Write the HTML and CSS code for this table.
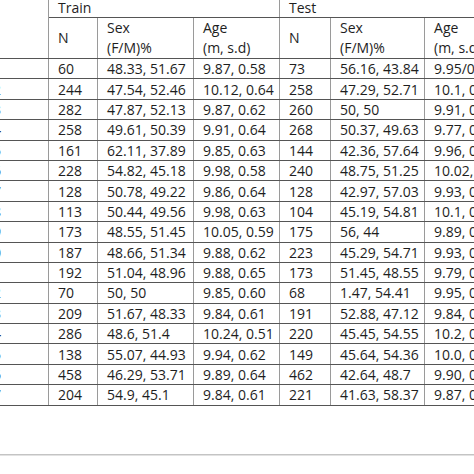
FILE: index.html
```html
<!DOCTYPE html>
<html>
<head>
<meta charset="utf-8">
<link rel="stylesheet" href="styles.css">
</head>
<body>
<div class="page">
<table class="data">
<colgroup>
<col class="c-label"><col class="c-n1"><col class="c-sex1"><col class="c-age1"><col class="c-n2"><col class="c-sex2"><col class="c-age2">
</colgroup>
<thead>
<tr class="h1">
<th class="label" rowspan="2"></th>
<th colspan="3">Train</th>
<th colspan="3">Test</th>
</tr>
<tr class="h2">
<th>N</th><th>Sex<br>(F/M)%</th><th>Age<br>(m, s.d)</th>
<th>N</th><th>Sex<br>(F/M)%</th><th>Age<br>(m, s.d)</th>
</tr>
</thead>
<tbody>
<tr><td class="label">Site 1</td><td>60</td><td>48.33, 51.67</td><td>9.87, 0.58</td><td>73</td><td>56.16, 43.84</td><td>9.95/0.61</td></tr>
<tr><td class="label">Site 2</td><td>244</td><td>47.54, 52.46</td><td>10.12, 0.64</td><td>258</td><td>47.29, 52.71</td><td>10.1, 0.63</td></tr>
<tr><td class="label">Site 3</td><td>282</td><td>47.87, 52.13</td><td>9.87, 0.62</td><td>260</td><td>50, 50</td><td>9.91, 0.62</td></tr>
<tr><td class="label">Site 4</td><td>258</td><td>49.61, 50.39</td><td>9.91, 0.64</td><td>268</td><td>50.37, 49.63</td><td>9.77, 0.63</td></tr>
<tr><td class="label">Site 5</td><td>161</td><td>62.11, 37.89</td><td>9.85, 0.63</td><td>144</td><td>42.36, 57.64</td><td>9.96, 0.61</td></tr>
<tr><td class="label">Site 6</td><td>228</td><td>54.82, 45.18</td><td>9.98, 0.58</td><td>240</td><td>48.75, 51.25</td><td>10.02, 0.60</td></tr>
<tr><td class="label">Site 7</td><td>128</td><td>50.78, 49.22</td><td>9.86, 0.64</td><td>128</td><td>42.97, 57.03</td><td>9.93, 0.62</td></tr>
<tr><td class="label">Site 8</td><td>113</td><td>50.44, 49.56</td><td>9.98, 0.63</td><td>104</td><td>45.19, 54.81</td><td>10.1, 0.61</td></tr>
<tr><td class="label">Site 9</td><td>173</td><td>48.55, 51.45</td><td>10.05, 0.59</td><td>175</td><td>56, 44</td><td>9.89, 0.60</td></tr>
<tr><td class="label">Site 10</td><td>187</td><td>48.66, 51.34</td><td>9.88, 0.62</td><td>223</td><td>45.29, 54.71</td><td>9.93, 0.61</td></tr>
<tr><td class="label">Site 11</td><td>192</td><td>51.04, 48.96</td><td>9.88, 0.65</td><td>173</td><td>51.45, 48.55</td><td>9.79, 0.63</td></tr>
<tr><td class="label">Site 12</td><td>70</td><td>50, 50</td><td>9.85, 0.60</td><td>68</td><td>1.47, 54.41</td><td>9.95, 0.62</td></tr>
<tr><td class="label">Site 13</td><td>209</td><td>51.67, 48.33</td><td>9.84, 0.61</td><td>191</td><td>52.88, 47.12</td><td>9.84, 0.61</td></tr>
<tr><td class="label">Site 14</td><td>286</td><td>48.6, 51.4</td><td>10.24, 0.51</td><td>220</td><td>45.45, 54.55</td><td>10.2, 0.58</td></tr>
<tr><td class="label">Site 15</td><td>138</td><td>55.07, 44.93</td><td>9.94, 0.62</td><td>149</td><td>45.64, 54.36</td><td>10.0, 0.62</td></tr>
<tr><td class="label">Site 16</td><td>458</td><td>46.29, 53.71</td><td>9.89, 0.64</td><td>462</td><td>42.64, 48.7</td><td>9.90, 0.63</td></tr>
<tr><td class="label">Site 17</td><td>204</td><td>54.9, 45.1</td><td>9.84, 0.61</td><td>221</td><td>41.63, 58.37</td><td>9.87, 0.62</td></tr>
</tbody>
</table>
<div class="footer-rule"></div>
</div>
</body>
</html>
```
FILE: styles.css
```css
html, body {
  margin: 0;
  padding: 0;
  background: #ffffff;
  overflow: hidden;
}
body {
  width: 474px;
  height: 474px;
  font-family: "Open Sans", "Noto Sans", sans-serif;
  font-size: 14px;
  color: #1e1e1e;
}
.page {
  width: 474px;
  height: 474px;
  overflow: hidden;
}
.data {
  border-collapse: collapse;
  table-layout: fixed;
  width: 566px;
  margin-left: -52px;
  margin-top: -2px;
}
.c-label { width: 100px; }
.c-n1 { width: 49px; }
.c-sex1 { width: 96px; }
.c-age1 { width: 86px; }
.c-n2 { width: 51px; }
.c-sex2 { width: 94px; }
.c-age2 { width: 90px; }

.data th, .data td {
  font-weight: normal;
  text-align: left;
  white-space: nowrap;
  overflow: hidden;
  padding: 0 0 0 9px;
  border-top: 1px solid #555555;
  border-bottom: 1px solid #555555;
  border-left: 1px solid #9a9a9a;
  border-right: 1px solid #9a9a9a;
  line-height: 19px;
}
.data td {
  height: 19.4px;
}
.h1 th {
  height: 19px;
  border-top: none;
}
.h2 th {
  height: 39px;
  line-height: 20px;
}
.data .label {
  text-align: right;
  padding: 0 47px 0 0;
  overflow: hidden;
}
.footer-rule {
  margin-top: 48px;
  border-top: 1px solid #c4c4c4;
  height: 1px;
  background: #e2e2e2;
}
```
